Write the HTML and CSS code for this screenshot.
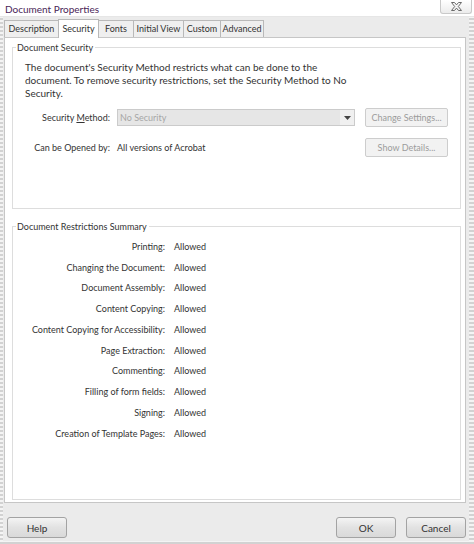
FILE: index.html
```html
<!DOCTYPE html>
<html>
<head>
    <title>Document Properties</title>
    <link rel="stylesheet" href="styles.css">
</head>
<body>
    <div class="window">
        <div class="titlebar">
            <span class="title">Document Properties</span>
            <button class="close">
                <svg width="11" height="9" viewBox="0 0 11 9">
                    <path d="M0.5 0.5h3l2 2.4 2-2.4h3L7.3 4.5l3.2 4h-3l-2-2.4-2 2.4h-3L3.7 4.5z" fill="none" stroke="#6a6a6a" stroke-width="1"/>
                </svg>
            </button>
        </div>
        <div class="dialog">
            <div class="tabs">
                <div class="tab tab-description">Description</div>
                <div class="tab tab-security active">Security</div>
                <div class="tab tab-fonts">Fonts</div>
                <div class="tab tab-initial">Initial View</div>
                <div class="tab tab-custom">Custom</div>
                <div class="tab tab-advanced">Advanced</div>
            </div>
            <div class="panel">
                <fieldset class="group">
                    <legend>Document Security</legend>
                    <div class="security-body">
                        <p class="intro">The document's Security Method restricts what can be done to the<br>document. To remove security restrictions, set the Security Method to No<br>Security.</p>
                        <div class="security-grid">
                            <span class="label">Security <u>M</u>ethod:</span>
                            <div class="select">
                                <span class="select-text">No Security</span>
                                <span class="select-arrow">
                                    <svg width="7" height="4" viewBox="0 0 7 4"><path d="M0 0h7L3.5 4z" fill="#444"/></svg>
                                </span>
                            </div>
                            <button class="small-button" disabled>Change Settings...</button>
                            <span class="label">Can be Opened by:</span>
                            <span class="value">All versions of Acrobat</span>
                            <button class="small-button" disabled>Show Details...</button>
                        </div>
                    </div>
                </fieldset>
                <fieldset class="group summary">
                    <legend>Document Restrictions Summary</legend>
                    <div class="summary-grid">
                        <span class="label">Printing:</span><span>Allowed</span>
                        <span class="label">Changing the Document:</span><span>Allowed</span>
                        <span class="label">Document Assembly:</span><span>Allowed</span>
                        <span class="label">Content Copying:</span><span>Allowed</span>
                        <span class="label">Content Copying for Accessibility:</span><span>Allowed</span>
                        <span class="label">Page Extraction:</span><span>Allowed</span>
                        <span class="label">Commenting:</span><span>Allowed</span>
                        <span class="label">Filling of form fields:</span><span>Allowed</span>
                        <span class="label">Signing:</span><span>Allowed</span>
                        <span class="label">Creation of Template Pages:</span><span>Allowed</span>
                    </div>
                </fieldset>
            </div>
            <div class="footer">
                <button class="button">Help</button>
                <div class="footer-right">
                    <button class="button">OK</button>
                    <button class="button">Cancel</button>
                </div>
            </div>
        </div>
    </div>
</body>
</html>
```

FILE: styles.css
```css
body {
    margin: 0;
    font-family: Lato, "Liberation Sans", sans-serif;
    font-size: 9px;
    color: #333333;
    background: repeating-linear-gradient(0deg, #d2d2d2 0 2px, #f4f4f4 2px 4px);
}
.window {
    width: 474px;
    height: 544px;
}
.titlebar {
    height: 17px;
    background: #ffffff;
    display: flex;
    justify-content: space-between;
    align-items: flex-start;
    border-bottom: 1px solid #e6e6e6;
    box-sizing: border-box;
}
.title {
    padding: 3px 0 0 5px;
    font-size: 10px;
    line-height: 12px;
    color: #4a2558;
}
.close {
    width: 32px;
    height: 14px;
    margin-right: 2px;
    padding: 0;
    border: 1px solid #c9c9c9;
    border-top: none;
    border-radius: 0 0 3px 3px;
    background: linear-gradient(#ffffff, #ececec);
    display: flex;
    align-items: center;
    justify-content: center;
}
.dialog {
    width: 466px;
    height: 524px;
    margin-left: 3px;
    background: #ebebeb;
}
.tabs {
    height: 20px;
    padding-left: 1px;
    display: flex;
    align-items: flex-end;
    box-sizing: border-box;
}
.tab {
    height: 17px;
    margin-right: -1px;
    border: 1px solid #b9b9b9;
    border-bottom: none;
    background: #efefef;
    line-height: 16px;
    text-align: center;
    white-space: nowrap;
    box-sizing: border-box;
}
.tab.active {
    position: relative;
    height: 19px;
    margin-bottom: -1px;
    background: #ffffff;
    line-height: 17px;
    z-index: 1;
}
.tab-description { width: 55px; }
.tab-security { width: 41px; }
.tab-fonts { width: 36px; }
.tab-initial { width: 51px; }
.tab-custom { width: 38px; }
.tab-advanced { width: 44px; }
.panel {
    width: 462px;
    height: 466px;
    margin-left: 1px;
    padding: 3px 4px 2px 7px;
    border: 1px solid #c6c6c6;
    background: #ffffff;
    box-sizing: border-box;
    display: flex;
    flex-direction: column;
}
.group {
    margin: 0;
    padding: 0;
    border: 1px solid #dddddd;
    min-width: 0;
}
.group legend {
    margin-left: 3px;
    padding: 0 2px 0 1px;
    line-height: 13px;
}
.security-body {
    padding: 7px 0 51px 12px;
}
.intro {
    margin: 0;
    font-size: 10px;
    line-height: 13px;
    white-space: nowrap;
}
.security-grid {
    margin-top: 8px;
    display: grid;
    grid-template-columns: 85px 238px 83px;
    grid-auto-rows: 19px;
    column-gap: 7px;
    row-gap: 11px;
    align-items: center;
}
.security-grid .small-button {
    margin-left: 3px;
}
.label {
    text-align: right;
    white-space: nowrap;
}
.select {
    height: 17px;
    border: 1px solid #cbcbcb;
    background: #e6e6e6;
    display: flex;
    box-sizing: border-box;
}
.select-text {
    flex: 1;
    padding-left: 2px;
    line-height: 15px;
    color: #a6a6a6;
}
.select-arrow {
    width: 14px;
    background: #f0f0f0;
    display: flex;
    align-items: center;
    justify-content: center;
}
.small-button {
    width: 83px;
    height: 19px;
    padding: 0;
    border: 1px solid #cdcdcd;
    border-radius: 2px;
    background: #f2f2f2;
    font-family: inherit;
    font-size: 9px;
    color: #9c9c9c;
    white-space: nowrap;
}
.summary {
    margin-top: 11px;
    flex: 1;
}
.summary-grid {
    padding-top: 3px;
    display: grid;
    grid-template-columns: 152px auto;
    grid-auto-rows: 20.75px;
    column-gap: 9px;
    align-items: center;
}
.footer {
    height: 38px;
    padding: 14px 3px 0 4px;
    display: flex;
    justify-content: space-between;
    align-items: flex-start;
    box-sizing: border-box;
}
.footer-right {
    display: flex;
    gap: 10px;
}
.button {
    width: 60px;
    height: 21px;
    padding: 0;
    border: 1px solid #a3a3a3;
    border-radius: 3px;
    background: linear-gradient(#f4f4f4, #e2e2e2 50%, #d9d9d9);
    font-family: inherit;
    font-size: 10px;
    color: #333333;
}
```
